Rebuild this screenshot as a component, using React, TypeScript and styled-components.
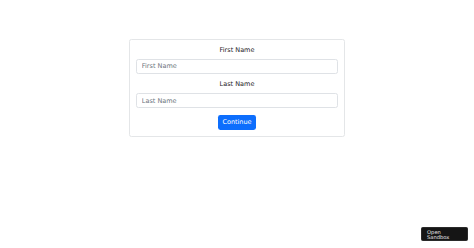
import React from "react";
import styled, { createGlobalStyle } from "styled-components";

const Global = createGlobalStyle`
  html, body { margin: 0; padding: 0; background: #fff; }
  body {
    font-family: "DejaVu Sans", system-ui, sans-serif;
    color: #212529;
  }
  * { box-sizing: border-box; }
`;

const Page = styled.div`
  width: 474px;
  height: 248px;
  padding-top: 38.8px;
  display: flex;
  flex-direction: column;
  align-items: center;
  position: relative;
`;

const Card = styled.form`
  width: 216px;
  border: 1px solid #e4e6e8;
  border-radius: 2.4px;
  padding: 6px;
  display: flex;
  flex-direction: column;
  align-items: stretch;
`;

const Group = styled.div`
  display: flex;
  flex-direction: column;
  margin-bottom: 6.4px;
`;

const Label = styled.label`
  font-size: 6.5px;
  line-height: 9.6px;
  text-align: center;
  margin-bottom: 3.2px;
  color: #1e2125;
`;

const Input = styled.input`
  height: 15.2px;
  width: 100%;
  padding: 0 4.8px;
  font-family: "DejaVu Sans", system-ui, sans-serif;
  font-size: 6.5px;
  color: #212529;
  border: 1px solid #dfe2e6;
  border-radius: 2.4px;
  outline: none;
  background: #fff;
  &::placeholder { color: #6c757d; }
`;

const ButtonRow = styled.div`
  display: flex;
  justify-content: center;
`;

const Button = styled.button`
  height: 15.2px;
  padding: 0 4.8px;
  font-family: "DejaVu Sans", system-ui, sans-serif;
  font-size: 6.5px;
  color: #fff;
  background: #0d6efd;
  border: none;
  border-radius: 2.4px;
  cursor: pointer;
`;

const Badge = styled.a`
  position: absolute;
  right: 6px;
  bottom: 7px;
  width: 47px;
  height: 14.5px;
  background: #151515;
  border: 0.5px solid #2a2a2a;
  border-radius: 1.5px;
  padding: 2.2px 5px;
  color: #e8e8e8;
  font-family: "DejaVu Sans", sans-serif;
  font-size: 5.2px;
  line-height: 5.4px;
  text-decoration: none;
`;

const BadgeText = styled.span`
  display: block;
  max-width: 30px;
`;

export default function App() {
  return (
    <>
      <Global />
      <Page>
        <Card onSubmit={(e) => e.preventDefault()}>
          <Group>
            <Label htmlFor="first">First Name</Label>
            <Input id="first" placeholder="First Name" />
          </Group>
          <Group>
            <Label htmlFor="last">Last Name</Label>
            <Input id="last" placeholder="Last Name" />
          </Group>
          <ButtonRow>
            <Button type="submit">Continue</Button>
          </ButtonRow>
        </Card>
        <Badge href="#">
          <BadgeText>Open Sandbox</BadgeText>
        </Badge>
      </Page>
    </>
  );
}
